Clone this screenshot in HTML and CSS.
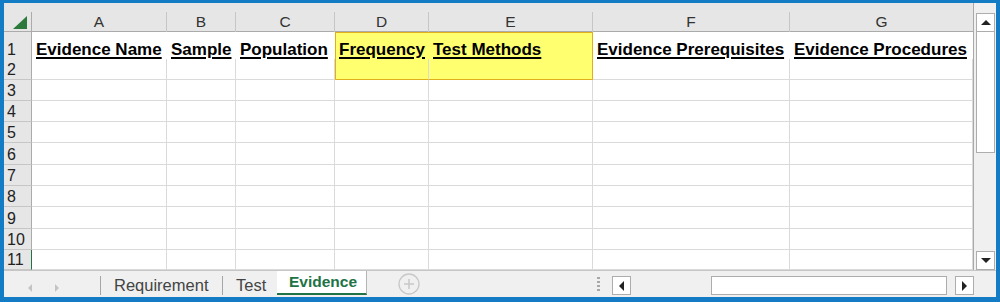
FILE: index.html
```html
<!DOCTYPE html>
<html lang="en">
<head>
    <meta charset="UTF-8">
    <title>Evidence</title>
    <link rel="stylesheet" href="styles.css">
</head>
<body>
<div class="frame">
    <div class="sheet">
        <div class="grid">
            <div class="row colhead">
                <div class="hd corner"><svg width="15" height="13" viewBox="0 0 15 13"><polygon points="14,0 14,13 0,13" fill="#2b7a3b"/></svg></div>
                <div class="hd">A</div><div class="hd">B</div><div class="hd">C</div><div class="hd">D</div>
                <div class="hd">E</div><div class="hd">F</div><div class="hd">G</div>
            </div>
            <div class="row first">
                <div class="num">1</div>
                <div class="c"><u>Evidence Name</u></div>
                <div class="c"><u>Sample</u></div>
                <div class="c"><u>Population</u></div>
                <div class="c hl hl-tl"><u>Frequency</u></div>
                <div class="c hl hl-tr"><u>Test Methods</u></div>
                <div class="c"><u>Evidence Prerequisites</u></div>
                <div class="c"><u>Evidence Procedures</u></div>
            </div>
            <div class="row">
                <div class="num">2</div><div class="c"></div><div class="c"></div><div class="c"></div>
                <div class="c hl hl-bl"></div><div class="c hl hl-br"></div><div class="c"></div><div class="c"></div>
            </div>
            <div class="row"><div class="num">3</div><div class="c"></div><div class="c"></div><div class="c"></div><div class="c"></div><div class="c"></div><div class="c"></div><div class="c"></div></div>
            <div class="row"><div class="num">4</div><div class="c"></div><div class="c"></div><div class="c"></div><div class="c"></div><div class="c"></div><div class="c"></div><div class="c"></div></div>
            <div class="row"><div class="num">5</div><div class="c"></div><div class="c"></div><div class="c"></div><div class="c"></div><div class="c"></div><div class="c"></div><div class="c"></div></div>
            <div class="row tall"><div class="num">6</div><div class="c"></div><div class="c"></div><div class="c"></div><div class="c"></div><div class="c"></div><div class="c"></div><div class="c"></div></div>
            <div class="row"><div class="num">7</div><div class="c"></div><div class="c"></div><div class="c"></div><div class="c"></div><div class="c"></div><div class="c"></div><div class="c"></div></div>
            <div class="row"><div class="num">8</div><div class="c"></div><div class="c"></div><div class="c"></div><div class="c"></div><div class="c"></div><div class="c"></div><div class="c"></div></div>
            <div class="row tall"><div class="num">9</div><div class="c"></div><div class="c"></div><div class="c"></div><div class="c"></div><div class="c"></div><div class="c"></div><div class="c"></div></div>
            <div class="row"><div class="num">10</div><div class="c"></div><div class="c"></div><div class="c"></div><div class="c"></div><div class="c"></div><div class="c"></div><div class="c"></div></div>
            <div class="row last"><div class="num cur">11</div><div class="c"></div><div class="c"></div><div class="c"></div><div class="c"></div><div class="c"></div><div class="c"></div><div class="c"></div></div>
        </div>
        <div class="vscroll">
            <div class="sbtn"><span class="tri up"></span></div>
            <div class="vthumb"></div>
            <div class="vtrack"></div>
            <div class="sbtn"><span class="tri down"></span></div>
        </div>
    </div>
    <div class="tabbar">
        <div class="nav"><span class="tri left light"></span><span class="tri right light"></span></div>
        <div class="tab t-req">Requirement</div>
        <div class="tab t-test">Test</div>
        <div class="tab active">Evidence</div>
        <div class="plus"><svg width="22" height="22" viewBox="0 0 22 22"><circle cx="11" cy="11" r="10" fill="none" stroke="#c8c8c8" stroke-width="1.3"/><path d="M11 6v10M6 11h10" stroke="#c8c8c8" stroke-width="1.5"/></svg></div>
        <div class="spacer"></div>
        <div class="dots"><i></i><i></i><i></i><i></i></div>
        <div class="hscroll">
            <div class="sbtn h"><span class="tri left"></span></div>
            <div class="htrack"></div>
            <div class="hthumb"></div>
            <div class="sbtn h"><span class="tri right"></span></div>
        </div>
    </div>
</div>
</body>
</html>
```

FILE: styles.css
```css
body{
    margin:0;
    font-family: "Liberation Sans", Arial, sans-serif;
}
.frame{
    width:1000px;
    height:302px;
    box-sizing:border-box;
    border-style:solid;
    border-color:#137cc4;
    border-width:3px 4px 5px 4px;
    display:flex;
    flex-direction:column;
    background:#f0f0f0;
}
.sheet{
    display:flex;
    height:267px;
}
.grid{
    width:969px;
    background:#fff;
    overflow:hidden;
    border-right:1px solid #a9a9a9;
}
.row{
    display:grid;
    grid-template-columns: 28px 135px 69px 99px 94px 164px 197px 183px;
    height:21px;
}
.row.tall{ height:22px; }
.row.first{ height:27px; }
.row.last{ height:20px; }

/* column letters */
.colhead{
    height:29px;
    box-sizing:border-box;
    padding-top:9px;
    background:#e6e6e6;
    border-bottom:1px solid #ababab;
}
.hd{
    border-right:1px solid #c6c6c6;
    text-align:center;
    font-size:15.5px;
    line-height:20px;
    color:#333;
}
.hd.corner{
    border-right:1px solid #ababab;
    display:flex;
    justify-content:flex-end;
    align-items:flex-end;
    padding:0 3px 3px 0;
}
.hd:last-child{ border-right:none; }

/* row numbers */
.num{
    background:#e6e6e6;
    border-right:1px solid #ababab;
    border-bottom:1px solid #c6c6c6;
    font-size:16px;
    color:#222;
    display:flex;
    align-items:flex-end;
    padding-left:3px;
    line-height:19px;
}
.num.cur{ border-right:1px solid #217346; }

.c{
    border-right:1px solid #dadada;
    border-bottom:1px solid #dadada;
    box-sizing:border-box;
    white-space:nowrap;
    overflow:visible;
}
.first .c{
    border:none;
    padding:8px 0 0 4px;
    font-size:17px;
    font-weight:bold;
    line-height:20px;
    color:#000;
}
.first .c u{ text-decoration-thickness:1.5px; text-underline-offset:2px; }

.hl{ background:#ffff6f; }
.hl-tl{ box-shadow: inset 1px 1px 0 #dfb01c; }
.hl-tr{ box-shadow: inset -1px 1px 0 #dfb01c; }
.hl-bl{ box-shadow: inset 1px 0 0 #dfb01c; border-bottom-color:#dfb01c !important; }
.hl-br{ border-right-color:#dfb01c !important; border-bottom-color:#dfb01c !important; }

/* scrollbars */
.vscroll{
    width:22px;
    display:flex;
    flex-direction:column;
    padding:10px 0 0 2px;
    box-sizing:border-box;
}
.sbtn{
    width:17px;
    height:17px;
    background:#fff;
    border:1px solid #adadad;
    display:flex;
    align-items:center;
    justify-content:center;
}
.vthumb{
    width:17px;
    height:120px;
    background:#fff;
    border:1px solid #adadad;
    border-top:none;
}
.vtrack{ flex:1; }

.tri{ width:0; height:0; border-style:solid; border-color:transparent; }
.tri.up{ border-width:0 5px 5px 5px; border-bottom-color:#222; }
.tri.down{ border-width:5px 5px 0 5px; border-top-color:#222; }
.tri.left{ border-width:5px 5px 5px 0; border-right-color:#222; }
.tri.right{ border-width:5px 0 5px 5px; border-left-color:#222; }
.tri.light.left{ border-right-color:#c4c4c4; border-width:4px 4px 4px 0; }
.tri.light.right{ border-left-color:#c4c4c4; border-width:4px 0 4px 4px; }

/* tab bar */
.tabbar{
    height:27px;
    display:flex;
    align-items:flex-start;
    border-top:1px solid #c6c6c6;
    box-sizing:border-box;
}
.nav{
    width:96px;
    height:18px;
    margin-top:8px;
    display:flex;
    align-items:center;
    gap:23px;
    padding-left:24px;
    box-sizing:border-box;
}
.tab{
    font-size:16.5px;
    color:#444;
    padding:0 0 0 13px;
    height:19px;
    line-height:18px;
    border-left:1px solid #a6a6a6;
    margin-top:5px;
    box-sizing:border-box;
    white-space:nowrap;
}
.t-req{ width:122px; }
.t-test{ width:55px; }
.tab.active{
    width:90px;
    margin-top:0;
    height:24px;
    padding:2px 0 0 12px;
    background:#fff;
    color:#217346;
    font-weight:bold;
    font-size:15.5px;
    border-left:none;
    border-right:1px solid #b5b5b5;
    border-bottom:2px solid #217346;
}
.plus{
    margin:2px 0 0 31px;
    height:22px;
}
.spacer{ flex:1; }
.dots{
    display:flex;
    flex-direction:column;
    gap:2px;
    margin:6px 12px 0 0;
}
.dots i{
    width:3px;
    height:2px;
    background:#a8a8a8;
}
.hscroll{
    width:384px;
    display:flex;
    margin-top:5px;
}
.sbtn.h{
    width:17px;
    height:17px;
}
.htrack{ width:80px; }
.hthumb{
    width:234px;
    height:17px;
    background:#fff;
    border:1px solid #adadad;
    margin-right:8px;
}
```
